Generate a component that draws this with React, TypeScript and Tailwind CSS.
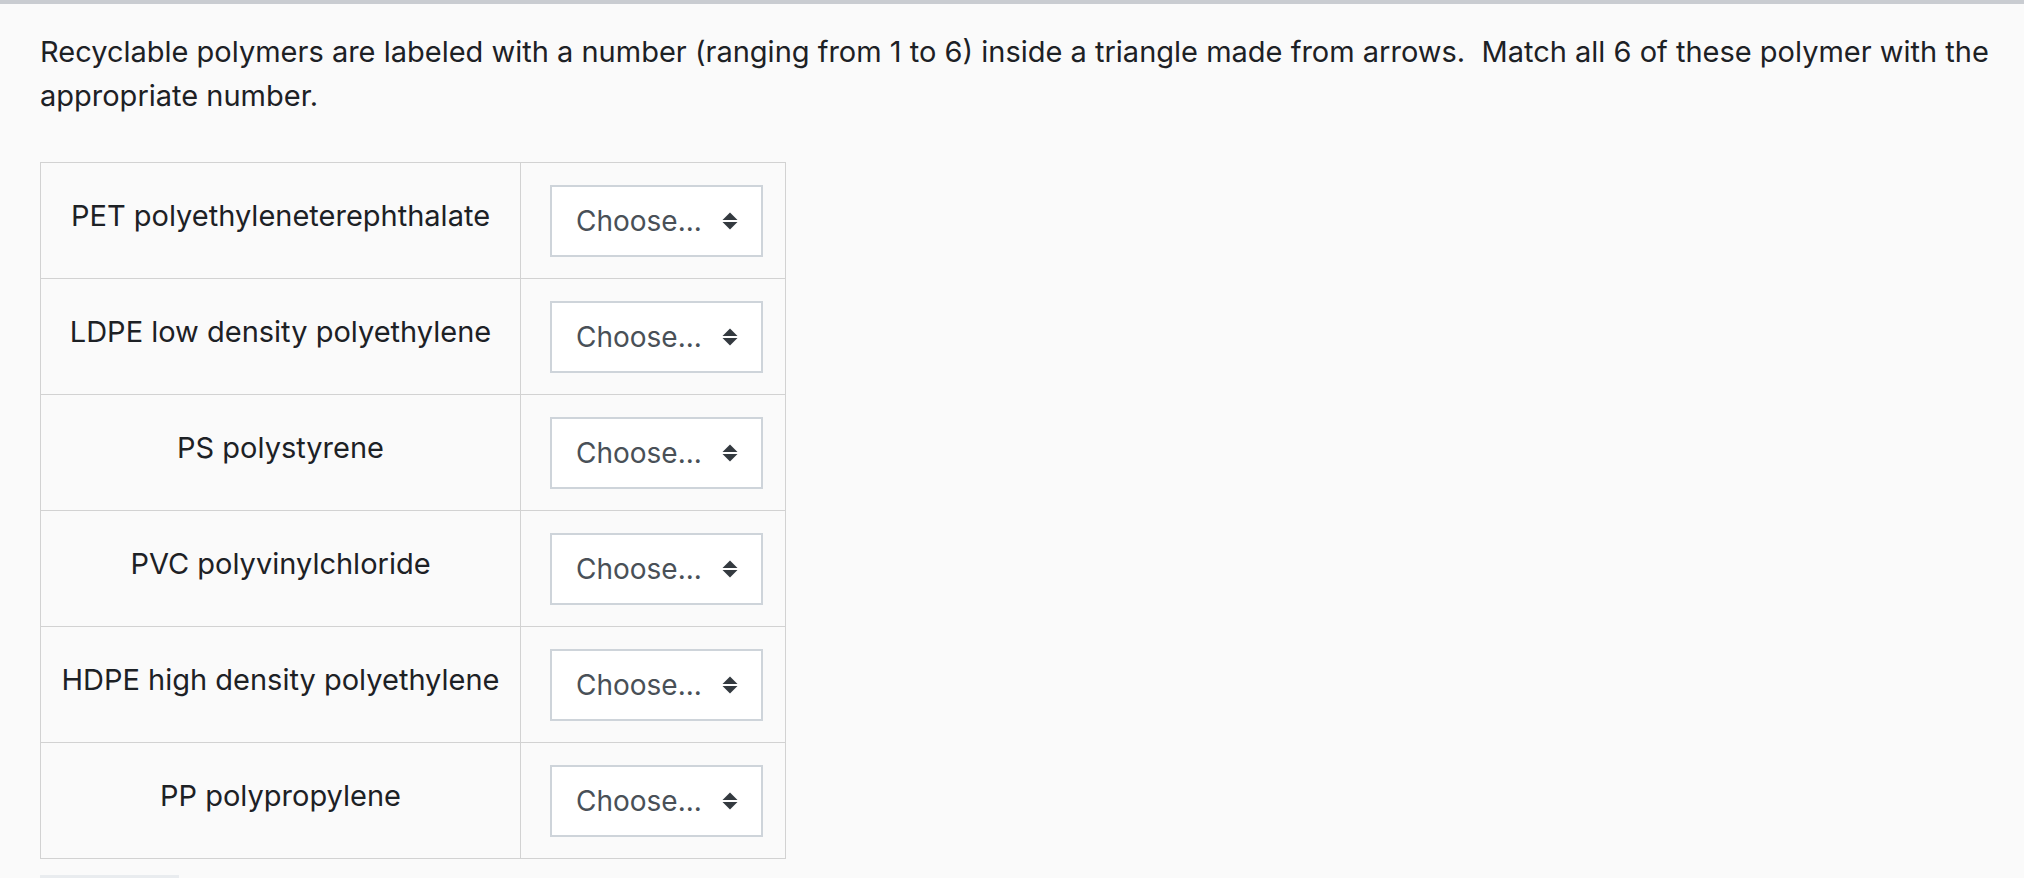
const rows = [
	"PET polyethyleneterephthalate",
	"LDPE low density polyethylene",
	"PS polystyrene",
	"PVC polyvinylchloride",
	"HDPE high density polyethylene",
	"PP polypropylene",
]

function SortArrows() {
	return (
		<svg
			width="16"
			height="18"
			viewBox="0 0 16 18"
			className="pointer-events-none absolute right-[25px] top-1/2 -translate-y-1/2"
		>
			<path d="M8 0.5 L15.5 8 H0.5 Z" fill="#343a40" />
			<path d="M8 17.5 L15.5 10 H0.5 Z" fill="#343a40" />
		</svg>
	)
}

function ChooseSelect({ label }: { label: string }) {
	return (
		<div className="relative w-[213px]">
			<select
				aria-label={label}
				defaultValue=""
				className="h-[72px] w-full appearance-none rounded-none border-2 border-[#ced4da] bg-white pl-[24px] pr-12 text-[28px] text-[#495057] outline-none"
			>
				<option value="">Choose...</option>
				<option value="1">1</option>
				<option value="2">2</option>
				<option value="3">3</option>
				<option value="4">4</option>
				<option value="5">5</option>
				<option value="6">6</option>
			</select>
			<SortArrows />
		</div>
	)
}

export default function App() {
	return (
		<div
			className="min-h-screen bg-[#fafafa] text-[#1d2125]"
			style={{ fontFamily: "Inter, 'Noto Sans', sans-serif" }}
		>
			<div className="h-1 bg-[#c9ccd1]" />
			<div className="pl-10 pr-5 pt-[26px]">
				<p className="text-[29px] leading-[44px]">
					Recyclable polymers are labeled with a number (ranging from 1 to 6) inside a
					triangle made from arrows.{"\u00a0"} Match all 6 of these polymer with the
					appropriate number.
				</p>

				<table className="mt-[44px] border-collapse border border-[#d2d2d2]">
					<tbody>
						{rows.map((r) => (
							<tr key={r}>
								<td className="w-[480px] border border-[#d2d2d2] px-[20px] pt-[32px] text-center align-top text-[29px] leading-[42px]">
									{r}
								</td>
								<td className="border border-[#d2d2d2] pl-[29px] pr-[22px] pt-[22px] pb-[21px] align-middle">
									<ChooseSelect label={r} />
								</td>
							</tr>
						))}
					</tbody>
				</table>

				<div className="mt-4 h-10 w-[139px] bg-[#e9ecef]" />
			</div>
		</div>
	)
}
